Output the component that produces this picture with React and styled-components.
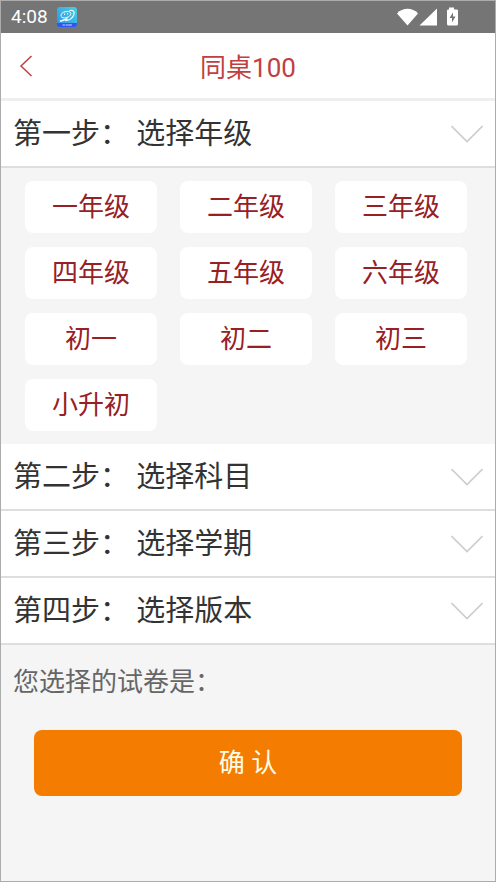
import React, { useState } from "react";
import styled, { createGlobalStyle } from "styled-components";

const GlobalStyle = createGlobalStyle`
  *, *::before, *::after { box-sizing: border-box; }
  body {
    margin: 0;
    background: #f5f5f5;
    font-family: Roboto, "Noto Sans CJK SC", sans-serif;
  }
  button { font-family: inherit; cursor: pointer; }
`;

const Screen = styled.div`
  display: flex;
  flex-direction: column;
  min-height: 100vh;
  border: 1px solid #acacac;
  background: #f5f5f5;
`;

const StatusBar = styled.div`
  display: flex;
  align-items: center;
  height: 32px;
  padding: 0 36px 0 10px;
  background: #757575;
  color: #fff;
`;

const Clock = styled.span`
  font-size: 19px;
  font-weight: 400;
  line-height: 32px;
`;

const AppBadge = styled.svg`
  width: 22px;
  height: 22px;
  margin-left: 8px;
`;

const StatusIcons = styled.svg`
  width: 62px;
  height: 20px;
  margin-left: auto;
`;

const Header = styled.header`
  display: grid;
  grid-template-columns: 48px 1fr 48px;
  align-items: center;
  height: 68px;
  border-bottom: 3px solid #eeeeee;
  background: #fff;
`;

const BackButton = styled.button`
  display: flex;
  align-items: center;
  height: 48px;
  padding: 0 0 0 18px;
  border: 0;
  background: none;
  color: #c1403f;
`;

const Title = styled.h1`
  margin: 0;
  padding-top: 4px;
  color: #c1403f;
  font-size: 26px;
  font-weight: 400;
  line-height: 40px;
  text-align: center;
`;

const StepButton = styled.button`
  display: flex;
  align-items: center;
  justify-content: space-between;
  width: 100%;
  height: 67px;
  padding: 0 12px;
  border: 0;
  border-bottom: 2px solid #dedede;
  background: #fff;
  color: #333;
  font-size: 29px;
  line-height: 40px;
  text-align: left;
`;

const Grades = styled.div`
  display: grid;
  grid-template-columns: repeat(3, 1fr);
  grid-auto-rows: 52px;
  gap: 14px 23px;
  padding: 13px 28px 13px 24px;
`;

const GradeButton = styled.button`
  padding: 0;
  border: 0;
  border-radius: 8px;
  background: #fff;
  color: #972024;
  font-size: 26px;
  line-height: 40px;
`;

const Summary = styled.p`
  margin: 0;
  padding: 17px 12px 15px;
  color: #666;
  font-size: 26px;
  line-height: 40px;
`;

const ConfirmButton = styled.button`
  height: 66px;
  margin: 13px 33px;
  padding: 0;
  border: 0;
  border-radius: 8px;
  background: #f47c00;
  color: #fffde6;
  font-size: 26px;
  line-height: 40px;
`;

function Chevron() {
  return (
    <svg width="32" height="18" viewBox="0 0 32 18" fill="none" aria-hidden="true">
      <path d="M.5 1 16 16.5 31.5 1" stroke="#cecece" strokeWidth="1.7" />
    </svg>
  );
}

function AppIcon() {
  return (
    <AppBadge viewBox="0 0 22 22" aria-hidden="true">
      <defs>
        <linearGradient id="badge" x1="0" y1="1" x2="1" y2="0">
          <stop offset="0" stopColor="#2d91ef" />
          <stop offset="1" stopColor="#46d1dc" />
        </linearGradient>
      </defs>
      <rect x="1" y="1" width="20" height="20" rx="3" fill="url(#badge)" />
      <path d="M1 17h20v1a3 3 0 0 1-3 3H4a3 3 0 0 1-3-3Z" fill="#3155f2" />
      <g fill="none" stroke="#fff" strokeLinecap="round">
        <path d="M5 10C4.500 7 8 5.500 11.500 5.500c3.200 0 4 2 2.700 3.800-2 2.700-7 3.500-8.700 1.700" strokeWidth="1" />
        <path d="M14 4.500c3-.8 4.700 1 4 3.700-1 3.800-4.200 6-8.500 6.500" strokeWidth="1.100" />
        <path d="M4.500 15c2.500-.2 4.200-2 6.500-2" strokeWidth="1.600" />
        <path d="M8.500 8v.5M11.500 7.500v.5" strokeWidth="1" />
        <path d="M7 19h1.500M10 19h1.500M12.500 19h3" strokeWidth=".8" />
      </g>
    </AppBadge>
  );
}

function SystemIcons() {
  return (
    <StatusIcons viewBox="0 0 62 20" fill="#fff" role="img" aria-label="Wi-Fi, signal, battery charging">
      <path d="M0 6.500C5.500.3 15.500.3 21 6.500L10.500 18.500Z" />
      <path d="M40 1.500v17H22.500Z" />
      <path d="M52 .5h5v2h2.500q1.500 0 1.500 1v13.500q0 1.500-1.500 1.500h-8q-1.500 0-1.500-1.500V3.500Q50 2.500 51.500 2.500h.5Z" />
      <path d="M56 5.500 52.500 11h2.500V15.500L58.500 9.500H56Z" fill="#757575" />
    </StatusIcons>
  );
}

const grades = ["一年级", "二年级", "三年级", "四年级", "五年级", "六年级", "初一", "初二", "初三", "小升初"];

function Step({ label, expanded, onClick }) {
  return (
    <StepButton type="button" aria-expanded={expanded} onClick={onClick}>
      <span>{label}</span>
      <Chevron />
    </StepButton>
  );
}

export default function App() {
  const [open, setOpen] = useState(true);
  return (
    <>
      <GlobalStyle />
      <Screen>
        <StatusBar>
          <Clock>4:08</Clock>
          <AppIcon />
          <SystemIcons />
        </StatusBar>
        <Header>
          <BackButton type="button" aria-label="返回">
            <svg width="14" height="22" viewBox="0 0 14 22" fill="none" aria-hidden="true">
              <path d="M12.500 1 2 11l10.500 10" stroke="currentColor" strokeWidth="1.500" />
            </svg>
          </BackButton>
          <Title>同桌100</Title>
        </Header>
        <Step label="第一步： 选择年级" expanded={open} onClick={() => setOpen(!open)} />
        {open && (
          <Grades>
            {grades.map((grade) => (
              <GradeButton key={grade} type="button">{grade}</GradeButton>
            ))}
          </Grades>
        )}
        <Step label="第二步： 选择科目" expanded={false} />
        <Step label="第三步： 选择学期" expanded={false} />
        <Step label="第四步： 选择版本" expanded={false} />
        <Summary>您选择的试卷是：</Summary>
        <ConfirmButton type="button">确 认</ConfirmButton>
      </Screen>
    </>
  );
}
